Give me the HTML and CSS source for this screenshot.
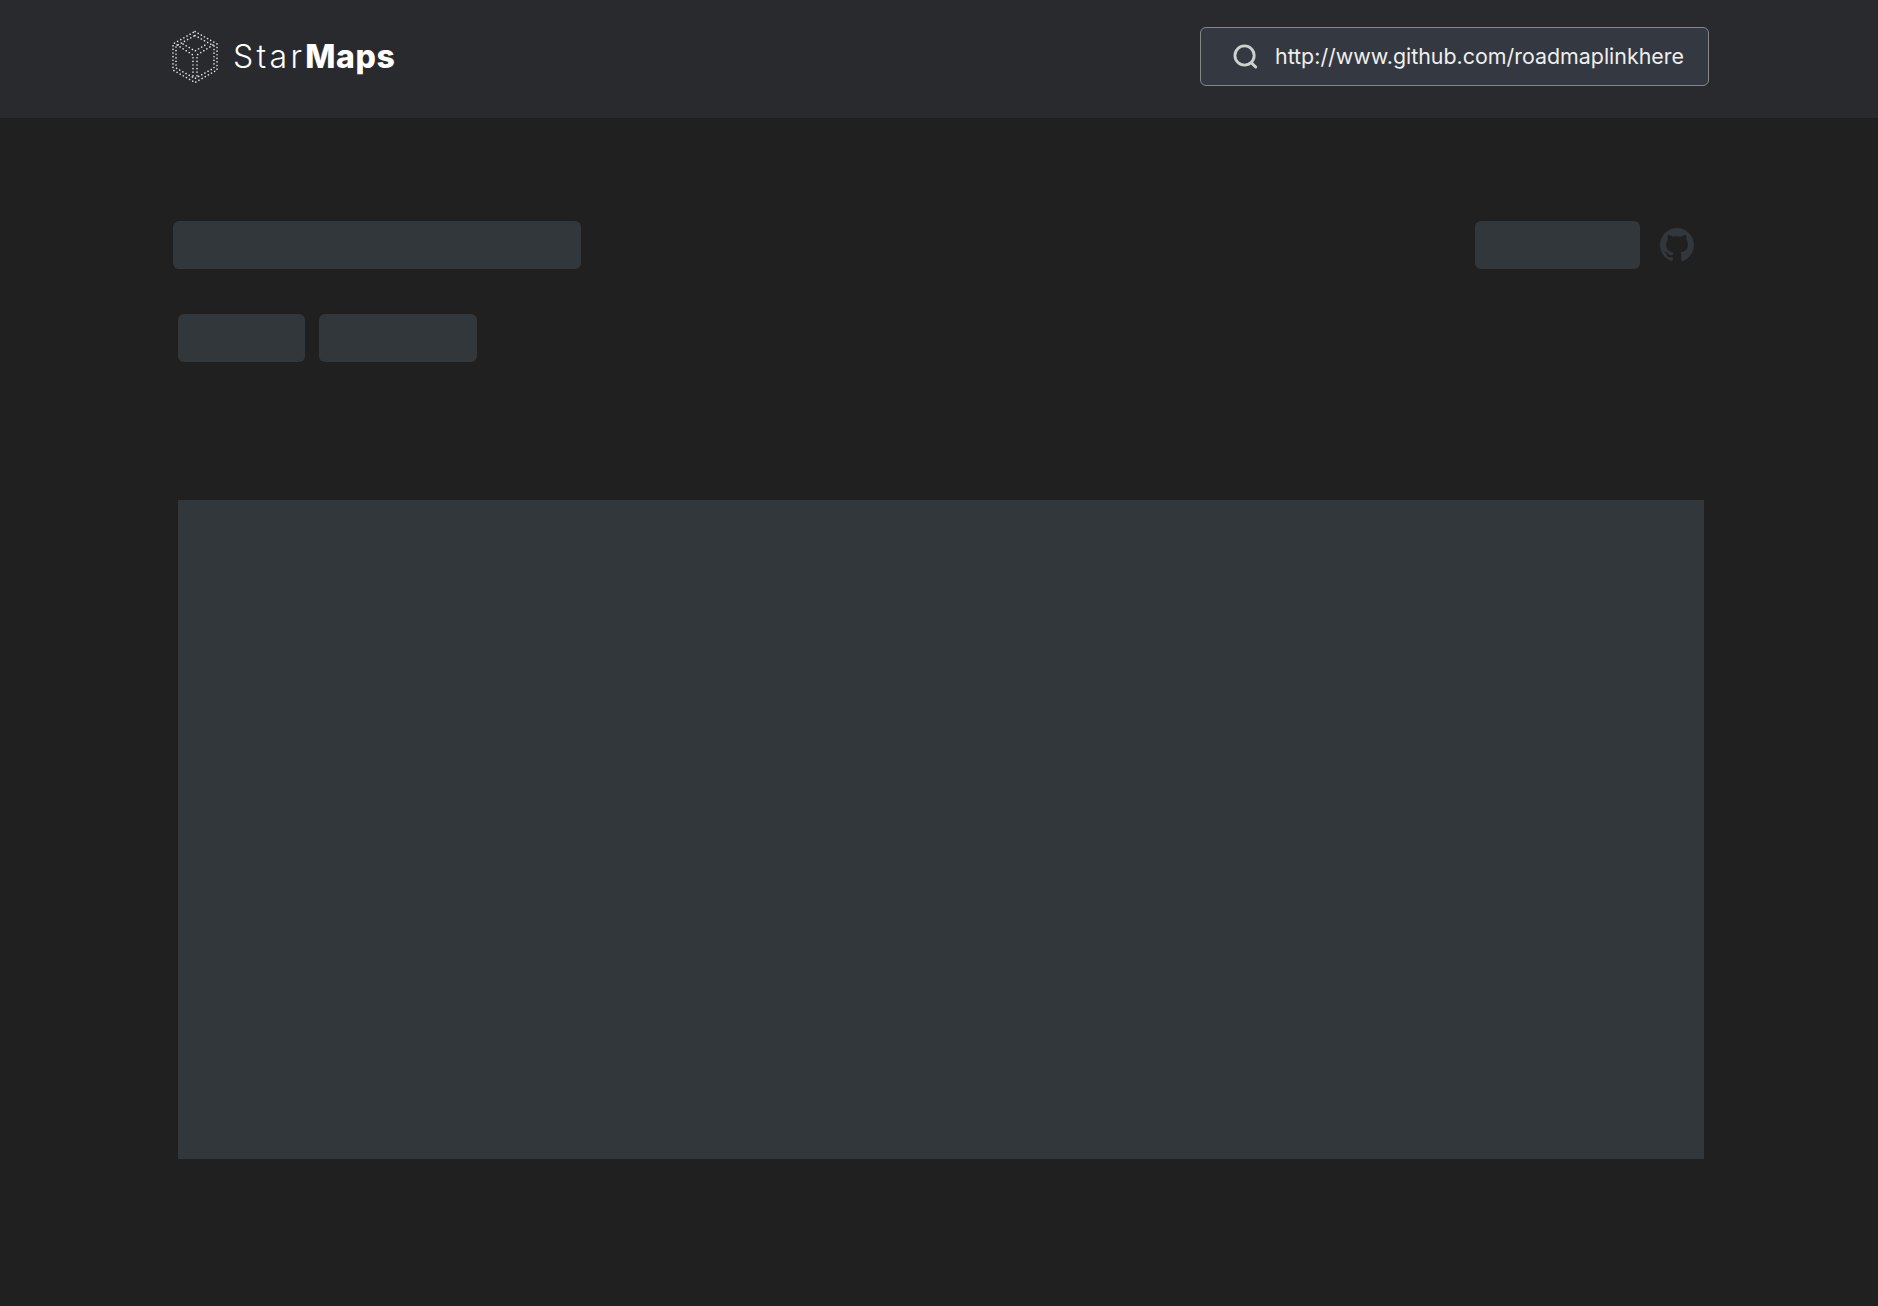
FILE: index.html
```html
<!DOCTYPE html>
<html lang="en">
<head>
<meta charset="utf-8">
<title>StarMaps</title>
<link rel="stylesheet" href="styles.css">
</head>
<body>
<header class="topbar">
  <div class="brand">
    <svg class="brand-icon" viewBox="0 0 48 54" width="48" height="54" fill="none" stroke="#e4e4e4" stroke-width="1.6" stroke-linecap="round" stroke-dasharray="0.1 3.5">
      <path d="M24 1.5 L46 14 L46 40 L24 52.5 L2 40 L2 14 Z"/>
      <path d="M24 5.5 L43 16 L43 38 L24 48.5 L5 38 L5 16 Z"/>
      <path d="M6 15 L22 25 L22 46"/>
      <path d="M42 15 L26 25 L26 46"/>
      <path d="M12 14 L24 21 L36 14"/>
    </svg>
    <div class="brand-name"><span class="brand-light">Star</span><span class="brand-bold">Maps</span></div>
  </div>
  <div class="search">
    <svg class="search-icon" viewBox="0 0 26 26" width="25" height="25" fill="none" stroke="#cfcfcf" stroke-width="3" stroke-linecap="round">
      <circle cx="12" cy="12" r="10"/>
      <path d="M20 20.4 L23.6 24"/>
    </svg>
    <span class="search-text">http://www.github.com/roadmaplinkhere</span>
  </div>
</header>
<main class="content">
  <div class="title-row">
    <div class="skeleton title-skeleton"></div>
    <div class="title-actions">
      <div class="skeleton action-skeleton"></div>
      <svg class="github" viewBox="0 0 16 16" width="34" height="34"><path d="M8 0C3.58 0 0 3.58 0 8c0 3.54 2.29 6.53 5.47 7.59.4.07.55-.17.55-.38 0-.19-.01-.82-.01-1.49-2.01.37-2.53-.49-2.69-.94-.09-.23-.48-.94-.82-1.13-.28-.15-.68-.52-.01-.53.63-.01 1.08.58 1.23.82.72 1.21 1.87.87 2.33.66.07-.52.28-.87.51-1.07-1.78-.2-3.64-.89-3.64-3.95 0-.87.31-1.59.82-2.15-.08-.2-.36-1.02.08-2.12 0 0 .67-.21 2.2.82.64-.18 1.32-.27 2-.27.68 0 1.36.09 2 .27 1.53-1.04 2.2-.82 2.2-.82.44 1.1.16 1.92.08 2.12.51.56.82 1.27.82 2.15 0 3.07-1.87 3.75-3.65 3.95.29.25.54.73.54 1.48 0 1.07-.01 1.93-.01 2.2 0 .21.15.46.55.38A8.013 8.013 0 0016 8c0-4.42-3.58-8-8-8z"/></svg>
    </div>
  </div>
  <div class="tags">
    <div class="skeleton tag-short"></div>
    <div class="skeleton tag-long"></div>
  </div>
  <div class="panel"></div>
</main>
</body>
</html>
```
FILE: styles.css
```css
* { box-sizing: border-box; }
html, body { margin: 0; padding: 0; }
body {
  min-height: 1306px;
  background: #202020;
  font-family: "Inter", "Liberation Sans", sans-serif;
  overflow: hidden;
}
.topbar {
  height: 118px;
  padding: 0 169px 5px 171px;
  display: flex;
  align-items: center;
  justify-content: space-between;
  background: #292a2e;
}
.brand { display: flex; align-items: center; gap: 14px; }
.brand-icon { display: block; }
.brand-name { font-size: 32px; line-height: 1; color: #fff; }
.brand-light { font-weight: 300; letter-spacing: 3.3px; }
.brand-bold { font-weight: 800; letter-spacing: 0.6px; }
.search {
  width: 509px;
  height: 59px;
  padding-left: 31.5px;
  display: flex;
  align-items: center;
  gap: 17.5px;
  background: #343840;
  border: 1.5px solid #85878a;
  border-radius: 6px;
}
.search-icon { display: block; flex: none; }
.search-text { padding-bottom: 2px; font-size: 21.4px; color: #eeeeee; white-space: nowrap; }
.content { padding: 103px 174px 0 178px; }
.skeleton { height: 48px; background: #32373b; border-radius: 6px; }
.title-row {
  margin-left: -5px;
  padding-right: 10px;
  display: flex;
  align-items: center;
  justify-content: space-between;
}
.title-skeleton { width: 408px; }
.title-actions { display: flex; align-items: center; gap: 20px; }
.action-skeleton { width: 165px; }
.github { display: block; fill: #32373b; }
.tags { margin-top: 45px; display: flex; gap: 14px; }
.tag-short { width: 127px; }
.tag-long { width: 158px; }
.panel { margin-top: 138px; height: 659px; background: #32373b; }
```
